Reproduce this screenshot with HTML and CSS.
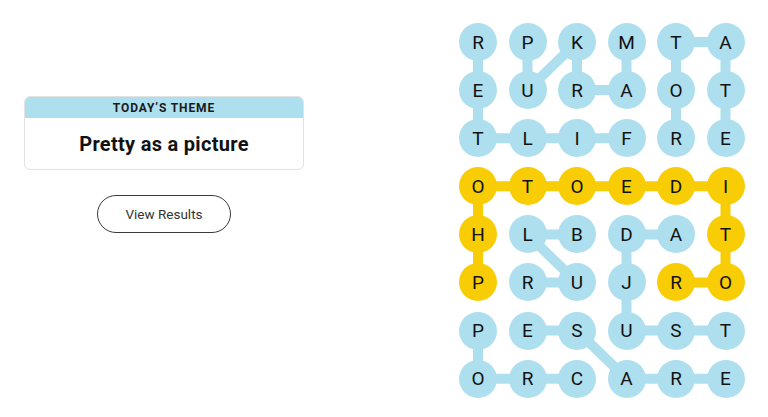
FILE: index.html
```html
<!DOCTYPE html>
<html lang="en">
<head>
<meta charset="utf-8">
<title>Strands</title>
<link rel="stylesheet" href="styles.css">
</head>
<body>
<main class="page">
  <section class="side">
    <div class="theme-card">
      <div class="theme-head">TODAY’S THEME</div>
      <div class="theme-body">Pretty as a picture</div>
    </div>
    <button class="results-btn" type="button">View Results</button>
  </section>
  <section class="board">
    <svg class="links" width="285.5" height="374.7" viewBox="0 0 285.5 374.7" aria-hidden="true">
      <g class="blue" stroke="#aedfee" stroke-width="10" stroke-linecap="round">
        <line x1="19" y1="19" x2="19" y2="67.1"/>
        <line x1="19" y1="67.1" x2="19" y2="115.2"/>
        <line x1="19" y1="115.2" x2="68.5" y2="115.2"/>
        <line x1="68.5" y1="115.2" x2="118" y2="115.2"/>
        <line x1="118" y1="115.2" x2="167.5" y2="115.2"/>
        <line x1="68.5" y1="19" x2="68.5" y2="67.1"/>
        <line x1="68.5" y1="67.1" x2="118" y2="19"/>
        <line x1="118" y1="19" x2="118" y2="67.1"/>
        <line x1="118" y1="67.1" x2="167.5" y2="67.1"/>
        <line x1="167.5" y1="67.1" x2="167.5" y2="19"/>
        <line x1="217" y1="19" x2="266.5" y2="19"/>
        <line x1="217" y1="19" x2="217" y2="67.1"/>
        <line x1="217" y1="67.1" x2="217" y2="115.2"/>
        <line x1="266.5" y1="19" x2="266.5" y2="67.1"/>
        <line x1="266.5" y1="67.1" x2="266.5" y2="115.2"/>
        <line x1="68.5" y1="211.4" x2="118" y2="211.4"/>
        <line x1="68.5" y1="211.4" x2="118" y2="259.5"/>
        <line x1="118" y1="259.5" x2="68.5" y2="259.5"/>
        <line x1="167.5" y1="211.4" x2="217" y2="211.4"/>
        <line x1="167.5" y1="211.4" x2="167.5" y2="259.5"/>
        <line x1="167.5" y1="259.5" x2="167.5" y2="307.6"/>
        <line x1="167.5" y1="307.6" x2="217" y2="307.6"/>
        <line x1="217" y1="307.6" x2="266.5" y2="307.6"/>
        <line x1="19" y1="307.6" x2="19" y2="355.7"/>
        <line x1="19" y1="355.7" x2="68.5" y2="355.7"/>
        <line x1="68.5" y1="355.7" x2="118" y2="355.7"/>
        <line x1="68.5" y1="307.6" x2="118" y2="307.6"/>
        <line x1="118" y1="307.6" x2="167.5" y2="355.7"/>
        <line x1="167.5" y1="355.7" x2="217" y2="355.7"/>
        <line x1="217" y1="355.7" x2="266.5" y2="355.7"/>
      </g>
      <g class="gold" stroke="#f8cd05" stroke-width="10" stroke-linecap="round">
        <line x1="19" y1="163.3" x2="19" y2="211.4"/>
        <line x1="19" y1="211.4" x2="19" y2="259.5"/>
        <line x1="19" y1="163.3" x2="266.5" y2="163.3"/>
        <line x1="266.5" y1="163.3" x2="266.5" y2="259.5"/>
        <line x1="266.5" y1="259.5" x2="217" y2="259.5"/>
      </g>
    </svg>
    <div class="grid">
      <span class="cell">R</span><span class="cell">P</span><span class="cell">K</span><span class="cell">M</span><span class="cell">T</span><span class="cell">A</span>
      <span class="cell">E</span><span class="cell">U</span><span class="cell">R</span><span class="cell">A</span><span class="cell">O</span><span class="cell">T</span>
      <span class="cell">T</span><span class="cell">L</span><span class="cell">I</span><span class="cell">F</span><span class="cell">R</span><span class="cell">E</span>
      <span class="cell gold">O</span><span class="cell gold">T</span><span class="cell gold">O</span><span class="cell gold">E</span><span class="cell gold">D</span><span class="cell gold">I</span>
      <span class="cell gold">H</span><span class="cell">L</span><span class="cell">B</span><span class="cell">D</span><span class="cell">A</span><span class="cell gold">T</span>
      <span class="cell gold">P</span><span class="cell">R</span><span class="cell">U</span><span class="cell">J</span><span class="cell gold">R</span><span class="cell gold">O</span>
      <span class="cell">P</span><span class="cell">E</span><span class="cell">S</span><span class="cell">U</span><span class="cell">S</span><span class="cell">T</span>
      <span class="cell">O</span><span class="cell">R</span><span class="cell">C</span><span class="cell">A</span><span class="cell">R</span><span class="cell">E</span>
    </div>
  </section>
</main>
</body>
</html>
```

FILE: styles.css
```css
* { box-sizing: border-box; }

html, body {
  margin: 0;
  background: #ffffff;
}

body {
  font-family: Roboto, "Liberation Sans", sans-serif;
  color: #121212;
}

.page {
  display: flex;
  justify-content: space-between;
  align-items: flex-start;
  padding: 0 23.5px 0 24px;
}

.side {
  width: 280px;
  margin-top: 96px;
  display: flex;
  flex-direction: column;
  align-items: center;
}

.theme-card {
  width: 100%;
  border: 1px solid #e2e2e2;
  border-radius: 6px;
  overflow: hidden;
}

.theme-head {
  background: #aedfee;
  height: 21px;
  display: flex;
  align-items: center;
  justify-content: center;
  font-size: 12px;
  font-weight: 700;
  letter-spacing: 0.9px;
  color: #1a1a1a;
}

.theme-body {
  height: 51px;
  display: flex;
  align-items: center;
  justify-content: center;
  font-size: 20px;
  font-weight: 700;
  letter-spacing: 0.3px;
  color: #121212;
}

.results-btn {
  margin-top: 25px;
  width: 134px;
  height: 38px;
  border: 1px solid #3a3a3a;
  border-radius: 19px;
  background: #ffffff;
  font-family: Roboto, "Liberation Sans", sans-serif;
  font-size: 13.5px;
  color: #333333;
  padding: 0;
}

.board {
  position: relative;
  margin-top: 23px;
  width: 285.5px;
  height: 374.7px;
}

.links {
  position: absolute;
  left: 0;
  top: 0;
}

.grid {
  position: relative;
  display: grid;
  grid-template-columns: repeat(6, 38px);
  grid-auto-rows: 38px;
  column-gap: 11.5px;
  row-gap: 10.1px;
}

.cell {
  width: 38px;
  height: 38px;
  border-radius: 50%;
  background: #aedfee;
  display: flex;
  align-items: center;
  justify-content: center;
  font-size: 19px;
  font-weight: 400;
  color: #121212;
}

.cell.gold {
  background: #f8cd05;
}
```
